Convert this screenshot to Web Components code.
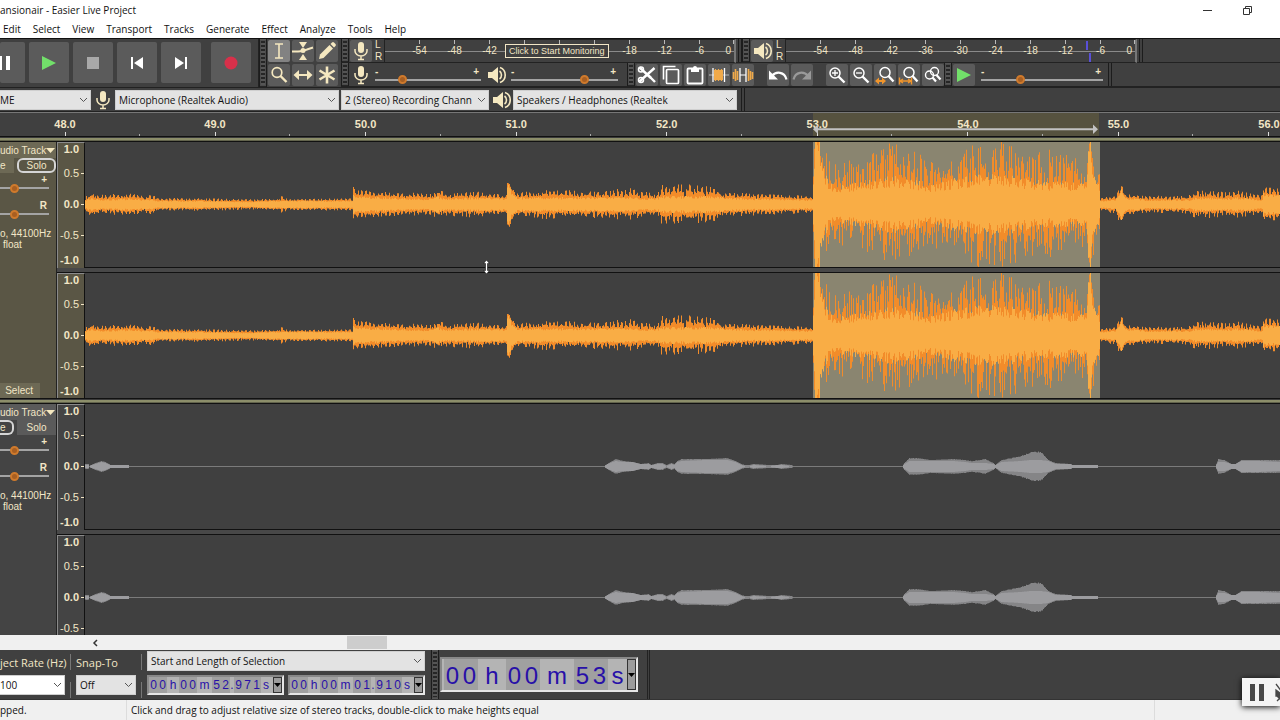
<!DOCTYPE html>
<html lang="en">
<head>
    <meta charset="UTF-8">
    <meta name="viewport" content="width=device-width, initial-scale=1.0">
    <title>Easier Live Project</title>
    <style>
        body {
            margin: 0;
            --ui: "Open Sans", "Noto Sans", sans-serif;
            --small: "Liberation Sans", Arial, sans-serif;
            --dock: #404040;
            --button: #5b5b5b;
            --cream: #f2e6c6;
            font: 10px/16px var(--ui);
        }
    </style>
</head>
<body>
    <audio-editor></audio-editor>
<script>
    // Base class: puts the styles and markup of a component in its shadow root
    class BaseElement extends HTMLElement {
        connectedCallback() {
            if (this.shadowRoot) return;
            const shadow = this.attachShadow({ mode: 'open' });
            shadow.innerHTML = `<style>* { box-sizing: border-box; }${this.styles()}</style>${this.render()}`;
        }
        attr(name, fallback = '') {
            return this.getAttribute(name) || fallback;
        }
    }

    // All icons are drawn on a 22x22 grid
    const ICONS = {
        pause: '<path d="M5 4h4v14H5zM13 4h4v14h-4z" fill="#fff"/>',
        play: '<path d="M4 4l14 7-14 7z" fill="#72e06a"/>',
        stop: '<path d="M5 5h12v12H5z" fill="#a9a9a9"/>',
        start: '<path d="M5 5h2v12H5zM17 5v12l-9-6z" fill="#fff"/>',
        end: '<path d="M15 5h2v12h-2zM5 5v12l9-6z" fill="#fff"/>',
        record: '<circle cx="11" cy="11" r="6.5" fill="#d8304a"/>',
        ibeam: '<path d="M7 4h8M7 18h8M11 4v14" fill="none" stroke="#f5e8c0" stroke-width="1.6"/>',
        envelope: '<path d="M7 2h8l-4 6zM7 20h8l-4-6z" fill="#f5e8c0"/><path d="M0 11.5h6c4 0 5-1 9-2l6-2" fill="none" stroke="#f5e8c0" stroke-width="2"/><circle cx="11" cy="10.500" r="2.500" fill="#f5e8c0"/>',
        pencil: '<path d="M3 19l1-4.500L13.500 5l3.500 3.500L7.500 18z" fill="#f5e8c0"/><path d="M14.500 4l1.500-1.500a1.500 1.500 0 0 1 2 0l1.500 1.500a1.500 1.500 0 0 1 0 2L18 7.500z" fill="#f5e8c0"/>',
        zoom: '<circle cx="9" cy="8.500" r="4.800" fill="none" stroke="#f5e8c0" stroke-width="1.700"/><path d="M12.500 12l6 6" stroke="#f5e8c0" stroke-width="2.400"/>',
        shift: '<path d="M1.500 11l5.500-5v4h8V6l5.500 5-5.500 5v-4H7v4z" fill="#f5e8c0"/>',
        multi: '<path d="M11 2.500v17M3.500 6.500l15 9M18.500 6.500l-15 9" stroke="#f5e8c0" stroke-width="2.600"/>',
        mic: '<rect x="8" y="2" width="6" height="11" rx="3" fill="#f5e8c0"/><path d="M5 9v2a6 5 0 0 0 12 0V9M11 16v4M8 19.500h6" fill="none" stroke="#f5e8c0" stroke-width="1.500"/>',
        speaker: '<path d="M3 8h4l6-5v16l-6-5H3z" fill="#f5e8c0"/><path d="M14.500 7a5 5 0 0 1 0 8M15 3.500a8 8 0 0 1 0 15" fill="none" stroke="#f5e8c0" stroke-width="1.600"/>',
        cut: '<path d="M3.500 3.500L15 14M3.500 17.500L18.500 4" stroke="#fff" stroke-width="2.400"/><circle cx="5" cy="5.500" r="2.500" fill="none" stroke="#fff" stroke-width="1.500"/><circle cx="5" cy="16" r="2.500" fill="none" stroke="#fff" stroke-width="1.500"/><path d="M12 11l7 7" stroke="#fff" stroke-width="2.400"/>',
        copy: '<path d="M3.500 15.500v-13h12" fill="none" stroke="#fff" stroke-width="1.600"/><rect x="6.500" y="5.500" width="12" height="14" rx="1" fill="none" stroke="#fff" stroke-width="1.700"/>',
        paste: '<rect x="3.500" y="4.500" width="15" height="15" rx="1" fill="none" stroke="#fff" stroke-width="1.800"/><path d="M7 4h2a2 2 0 0 1 4 0h2v4H7z" fill="#fff"/>',
        trim: '<path d="M1 11h20" stroke="#bbb"/><path d="M6 6h9v10H6z" fill="#f0aa4a"/><path d="M7.500 5v12M10.500 5v12M13.500 5v12" stroke="#f0aa4a" stroke-width="1.300"/><path d="M5 4v14M16.500 4v14" stroke="#fff" stroke-width="1.300"/>',
        silence: '<path d="M8 11h6" stroke="#fff"/><path d="M1.500 8v7M3.500 5v12M5.500 7v9M16.500 5v12M18.500 7v9M20.500 8v7" stroke="#f0aa4a" stroke-width="1.600"/><path d="M8 4v14M14 4v14" stroke="#fff" stroke-width="1.300"/>',
        undo: '<path d="M2 6.500v9h9z" fill="#fff"/><path d="M5 12c4-5 12.500-4.500 14.500 3.500" fill="none" stroke="#fff" stroke-width="2.200"/>',
        redo: '<path d="M20 6.500v9h-9z" fill="#9a9a9a"/><path d="M17 12C13 7 4.500 7.500 2.500 15.500" fill="none" stroke="#9a9a9a" stroke-width="2.200"/>',
        zoomin: '<circle cx="9" cy="9" r="5" fill="none" stroke="#fff" stroke-width="1.500"/><path d="M12.500 12.500l6 6" stroke="#fff" stroke-width="2.400"/><path d="M6 9h6M9 6v6" stroke="#fff" stroke-width="1.300"/>',
        zoomout: '<circle cx="9" cy="9" r="5" fill="none" stroke="#fff" stroke-width="1.500"/><path d="M12.500 12.500l6 6" stroke="#fff" stroke-width="2.400"/><path d="M6 9h6" stroke="#fff" stroke-width="1.300"/>',
        zoomsel: '<circle cx="11" cy="8.500" r="5" fill="none" stroke="#fff" stroke-width="1.500"/><path d="M14.500 12l5 5.500" stroke="#fff" stroke-width="2.400"/><path d="M1 17l4-3.500v2.500h3v-2.500l4 3.500-4 3.500v-2.500H5v2.500z" fill="#f0952c"/>',
        zoomfit: '<circle cx="11" cy="8.500" r="5" fill="none" stroke="#fff" stroke-width="1.500"/><path d="M14.500 12l5 5.500" stroke="#fff" stroke-width="2.400"/><path d="M1.500 13.500v7M13.500 13.500v7M2 17h11M5 15l-3 2 3 2M10 15l3 2-3 2" fill="none" stroke="#f0952c" stroke-width="1.400"/>',
        zoomtoggle: '<circle cx="12.500" cy="7.500" r="4" fill="none" stroke="#fff" stroke-width="1.400"/><circle cx="7.500" cy="11" r="4" fill="none" stroke="#fff" stroke-width="1.400"/><path d="M10.500 13.500l3.500 4M14.500 11l4 4.500" stroke="#fff" stroke-width="2.200"/>'
    };

    class SvgIcon extends BaseElement {
        styles() {
            return `
                :host { display: block; width: 22px; height: 22px; flex: none; }
                svg { display: block; width: 100%; height: 100%; }
            `;
        }
        render() {
            return `<svg viewBox="0 0 22 22" aria-hidden="true">${ICONS[this.attr('name')]}</svg>`;
        }
    }
    customElements.define('svg-icon', SvgIcon);

    class ToolButton extends BaseElement {
        styles() {
            return `
                :host { display: block; width: 22px; height: 22px; flex: none; }
                :host([large]) { width: 40px; height: 41px; }
                button {
                    display: flex;
                    align-items: center;
                    justify-content: center;
                    width: 100%;
                    height: 100%;
                    padding: 0;
                    border: 0;
                    border-radius: 2px;
                    background: var(--button);
                }
                :host([pressed]) button { background: #828282; }
                :host([cropped]) button { justify-content: flex-end; padding-right: 10px; }
            `;
        }
        render() {
            return `<button aria-label="${this.attr('label')}"><slot></slot></button>`;
        }
    }
    customElements.define('tool-button', ToolButton);

    // Ridged handle at the start of each toolbar
    class GrabHandle extends BaseElement {
        styles() {
            return `
                :host {
                    display: block;
                    width: 8px;
                    flex: none;
                    align-self: stretch;
                    border: 1px solid #1c1c1c;
                    border-width: 0 1px;
                    background: repeating-linear-gradient(#555 0 2px, #262626 2px 4px);
                    outline: 1px solid #4c4c4c;
                    outline-offset: -2px;
                }
            `;
        }
        render() { return ''; }
    }
    customElements.define('grab-handle', GrabHandle);

    class GainSlider extends BaseElement {
        styles() {
            return `
                :host { display: block; flex: none; color: var(--cream); }
                .signs {
                    display: flex;
                    justify-content: space-between;
                    height: 10px;
                    padding: 4px 2px 0 0;
                    font: bold 10px/6px var(--small);
                }
                input {
                    display: block;
                    appearance: none;
                    width: 100%;
                    height: 10px;
                    margin: 0;
                    background: linear-gradient(#a4a4a4, #a4a4a4) center / 100% 2px no-repeat;
                }
                input::-webkit-slider-thumb {
                    appearance: none;
                    width: 9px;
                    height: 9px;
                    border: 2px solid #cf7a2c;
                    border-radius: 50%;
                    background: #a85f22;
                }
            `;
        }
        render() {
            return `
                <div class="signs"><span>${this.attr('low')}</span><span>${this.attr('high')}</span></div>
                <input type="range" min="0" max="100" value="${this.attr('value')}" aria-label="${this.attr('label')}">
            `;
        }
    }
    customElements.define('gain-slider', GainSlider);

    class ComboBox extends BaseElement {
        styles() {
            return `
                :host { display: block; position: relative; height: 20px; flex: none; }
                select {
                    display: block;
                    appearance: none;
                    width: 100%;
                    height: 100%;
                    padding: 0 16px 0 3px;
                    border: 1px solid #cfcfcf;
                    border-radius: 0;
                    background: #e3e3e3;
                    color: #111;
                    font: inherit;
                }
                :host([flush]) select { padding-left: 0; border-left: 0; }
                :host([plain]) select { background: #fff; }
                svg { position: absolute; right: 3px; top: 7px; width: 9px; height: 6px; pointer-events: none; }
            `;
        }
        render() {
            return `
                <select aria-label="${this.attr('label')}"><option>${this.attr('value')}</option></select>
                <svg viewBox="0 0 9 6"><path d="M1 1l3.500 3.500L8 1" fill="none" stroke="#555"/></svg>
            `;
        }
    }
    customElements.define('combo-box', ComboBox);

    class LevelMeter extends BaseElement {
        styles() {
            return `
                :host { display: flex; flex: none; height: 24px; align-items: center; color: var(--cream); font: 10px/12px var(--small); }
                .sides { width: 12px; padding-left: 3px; }
                .scale {
                    position: relative;
                    display: grid;
                    grid-template-columns: repeat(9, 1fr) 17px;
                    width: 352px;
                    height: 24px;
                    padding-left: 17px;
                    border: 1px solid #222;
                    border-right: 2px solid #777;
                    background: linear-gradient(#8a8a8a, #8a8a8a) 0 11px / 100% 1px no-repeat;
                }
                .mark { padding-top: 5px; text-align: center; background: linear-gradient(#bbb, #bbb) center top / 1px 4px no-repeat; }
                .mark:last-of-type { text-align: right; padding-right: 3px; background-position: right top; }
                button {
                    position: absolute;
                    left: 120px;
                    top: 4px;
                    height: 14px;
                    padding: 0 3px;
                    border: 1px solid var(--cream);
                    background: var(--dock);
                    color: inherit;
                    font: 9px/12px var(--small);
                }
                svg { position: absolute; left: 0; top: 0; width: 350px; height: 22px; }
            `;
        }
        render() {
            const marks = ['-54', '-48', '-42', '-36', '-30', '-24', '-18', '-12', '-6', '0'];
            const prompt = this.attr('prompt');
            return `
                <slot></slot>
                <div class="sides">L<br>R</div>
                <div class="scale">
                    ${marks.map((m, i) => `<div class="mark">${prompt && i > 2 && i < 6 ? '' : m}</div>`).join('')}
                    ${prompt ? `<button>${prompt}</button>` : ''}
                    ${this.hasAttribute('peaks') ? '<svg viewBox="0 0 350 22"><path d="M300 1h2v9h-2zM303 13h2v9h-2z" fill="#5a50d8"/></svg>' : ''}
                </div>
            `;
        }
    }
    customElements.define('level-meter', LevelMeter);

    class TitleBar extends BaseElement {
        styles() {
            return `
                :host { display: flex; align-items: center; height: 20px; flex: none; background: #fff; color: #111; }
                h1 { flex: 1; margin: 0; font: inherit; }
                button { width: 40px; height: 20px; padding: 0; border: 0; background: none; }
                svg { display: block; margin: auto; width: 12px; height: 12px; }
                .controls { display: flex; padding-right: 13px; }
            `;
        }
        render() {
            return `
                <h1><slot></slot></h1>
                <div class="controls">
                    <button aria-label="Minimize"><svg viewBox="0 0 12 12"><path d="M2 6.500h9" stroke="#333"/></svg></button>
                    <button aria-label="Restore"><svg viewBox="0 0 12 12" fill="none" stroke="#333"><path d="M2.500 4.500h6v6h-6zM4.500 4V2.500h6v6H9"/></svg></button>
                </div>
            `;
        }
    }
    customElements.define('title-bar', TitleBar);

    class MenuBar extends BaseElement {
        styles() {
            return `
                :host { display: flex; gap: 12px; height: 18px; flex: none; padding-left: 3px; background: #fff; }
                button { padding: 0; border: 0; background: none; color: #111; font: inherit; }
            `;
        }
        render() {
            return this.attr('items').split(',').map(item => `<button>${item}</button>`).join('');
        }
    }
    customElements.define('menu-bar', MenuBar);

    class TimeRuler extends BaseElement {
        styles() {
            return `
                :host {
                    position: relative;
                    display: grid;
                    grid-template-columns: 140px repeat(7, 1fr) 86px;
                    height: 24px;
                    flex: none;
                    border-top: 1px solid #777;
                    background: var(--dock);
                    color: var(--cream);
                    font: bold 11px/22px var(--small);
                }
                svg { position: absolute; inset: 0; width: 100%; height: 100%; }
                .cell { display: flex; overflow: hidden; position: relative; }
                .cell:first-of-type { justify-content: flex-end; }
                .cell span {
                    flex: 0 0 150px;
                    text-align: center;
                    background:
                        linear-gradient(#ddd, #ddd) center bottom / 1px 4px no-repeat,
                        linear-gradient(#aaa, #aaa) right bottom / 1px 2px no-repeat;
                }
            `;
        }
        render() {
            const cells = [48, 49, 50, 51, 52, 53, 54, 55, 56].map(t => `<div class="cell"><span>${t}.0</span></div>`);
            return `
                <svg viewBox="0 0 1280 24" preserveAspectRatio="none">
                    <path d="M813 0h286v24H813z" fill="#56523f"/>
                </svg>
                ${cells.join('')}
                <svg viewBox="0 0 1280 24" preserveAspectRatio="none">
                    <path d="M813 17l5-5v4h275v-4l5 5-5 5v-4H818v4z" fill="#c2c2c2"/>
                </svg>
            `;
        }
    }
    customElements.define('time-ruler', TimeRuler);

    // Envelopes: [x, peak, rms] along a 1195 unit wide view, full scale is 62
    const MUSIC = [
        [0, 9, 4], [7, 12, 6], [14, 9, 4], [42, 11, 5], [60, 8, 4], [66, 10, 4], [74, 6, 3], [110, 6, 3], [160, 5, 2],
        [190, 5, 3], [196, 8, 3], [204, 5, 3], [267, 6, 3], [268, 17, 8], [275, 14, 7], [300, 12, 6], [340, 11, 5],
        [348, 11, 5], [352, 17, 7], [360, 11, 5], [390, 13, 6], [421, 9, 5], [422, 27, 18], [424, 24, 16], [428, 15, 9], [432, 11, 6],
        [460, 15, 6], [500, 13, 6], [545, 16, 6], [570, 10, 5], [576, 19, 7], [605, 20, 7], [628, 17, 7], [640, 12, 6],
        [665, 11, 5], [727, 8, 4], [728, 30, 25], [729, 62, 45], [730, 62, 62], [734, 62, 62], [735, 48, 38], [740, 56, 22], [746, 40, 16], [755, 42, 14],
        [770, 48, 16], [790, 54, 19], [810, 64, 22], [825, 60, 20], [845, 42, 15], [860, 50, 18], [873, 54, 20],
        [890, 64, 22], [905, 66, 24], [920, 66, 24], [932, 62, 20], [945, 52, 19], [960, 56, 18], [985, 48, 16], [1001, 42, 16],
        [1003, 62, 48], [1005, 62, 62], [1007, 60, 38], [1010, 34, 18], [1014, 32, 16], [1015, 6, 3], [1030, 9, 4], [1034, 18, 8],
        [1036, 22, 14], [1040, 10, 6], [1060, 8, 4], [1105, 9, 4], [1110, 15, 6], [1140, 12, 5], [1150, 14, 6], [1177, 9, 4],
        [1178, 20, 10], [1182, 17, 9], [1195, 15, 8]
    ];
    const VOICE = [
        [0, 2, 1], [3, 2, 1], [4, 0, 0], [6, 1, 1], [10, 3, 2], [16, 5, 4], [20, 4, 3], [25, 1, 1], [43, 1, 1], [44, 0, 0],
        [519, 0, 0], [522, 2, 2], [530, 7, 5], [538, 5, 4], [547, 4, 4], [555, 2, 2], [563, 3, 2], [566, 1, 1], [572, 3, 2],
        [577, 3, 2], [581, 1, 0], [586, 3, 2], [589, 2, 1], [592, 5, 4], [596, 7, 5], [620, 7, 6], [642, 8, 6], [650, 5, 4],
        [656, 2, 1], [660, 1, 0], [664, 1, 0], [668, 2, 1], [684, 1, 0], [692, 1, 1], [696, 2, 1], [706, 1, 0], [708, 0, 0],
        [817, 0, 0], [819, 3, 2], [824, 8, 5], [833, 8, 5], [845, 6, 5], [868, 7, 5], [880, 6, 4], [886, 5, 3], [900, 7, 3],
        [908, 3, 2], [910, 1, 1], [916, 6, 4], [935, 10, 5], [945, 14, 6], [955, 15, 6], [963, 6, 5], [970, 3, 2], [985, 2, 2],
        [987, 1, 1], [1012, 1, 1], [1013, 0, 0], [1130, 0, 0], [1133, 7, 4], [1139, 6, 4], [1146, 2, 2], [1150, 2, 2], [1156, 6, 5],
        [1172, 6, 5], [1195, 6, 4]
    ];

    class WaveForm extends BaseElement {
        styles() {
            return `
                :host { display: block; height: 125px; background: var(--dock); }
                svg { display: block; width: 100%; height: 100%; }
            `;
        }
        at(points, x) {
            let i = 1;
            while (i < points.length - 1 && points[i][0] < x) i++;
            const [a, b] = [points[i - 1], points[i]];
            const k = (x - a[0]) / (b[0] - a[0]);
            return [a[1] + (b[1] - a[1]) * k, a[2] + (b[2] - a[2]) * k];
        }
        render() {
            const voice = this.attr('kind') === 'voice';
            let seed = voice ? 5 : 23;
            const random = () => (seed = (seed * 16807) % 2147483647) / 2147483647;
            const points = voice ? VOICE : MUSIC;
            let peaks = '';
            let body = '';
            for (let x = 0; x < 1195; x++) {
                const [peak, rms] = this.at(points, x);
                const loud = x > 734 && x < 1015 && (x < 1002 || x > 1008);
                const teeth = voice || loud || x % 4 < 2 ? 1 : 0.5;
                const spread = voice ? 0.85 + random() * 0.15 : Math.pow(random(), loud ? 1.4 : 0.5) * teeth;
                const lower = voice ? spread : Math.pow(random(), loud ? 1.8 : 0.7) * teeth;
                const up = Math.min(62, rms + (peak - rms) * spread);
                const down = Math.min(62, rms + (peak - rms) * lower * 0.95);
                const core = voice ? rms : rms * (0.75 + random() * (loud ? 0.6 : 0.4));
                if (up > 0.2) peaks += `M${x} ${(62 - up).toFixed(1)}h1V${(63 + down).toFixed(1)}h-1z`;
                if (core > 0.2) body += `M${x} ${(62 - core).toFixed(1)}h1V${(63 + core).toFixed(1)}h-1z`;
            }
            return `
                <svg viewBox="0 0 1195 125" preserveAspectRatio="none" aria-hidden="true">
                    ${voice ? '' : '<path d="M728 0h287v125H728z" fill="#8a8570"/>'}
                    <path d="M0 62h1195v1H0z" fill="${voice ? '#7b7b7b' : '#f8ab43'}"/>
                    <path d="${peaks}" fill="${voice ? '#858587' : '#f28c2a'}"/>
                    <path d="${body}" fill="${voice ? '#9c9c9f' : '#f9ad45'}"/>
                </svg>
            `;
        }
    }
    customElements.define('wave-form', WaveForm);

    class AudioTrack extends BaseElement {
        styles() {
            return `
                :host {
                    --face: #444;
                    --panel-button: #5a5a5a;
                    display: grid;
                    grid-template-columns: 57px 1fr;
                    flex: none;
                    color: var(--cream);
                    font: 10px/11px var(--small);
                }
                :host([selected]) { --face: #5a5645; --panel-button: #6d6955; }
                .panel { display: flex; flex-direction: column; align-items: flex-start; background: var(--face); border-right: 1px solid #222; }
                button { padding: 0; border: 0; color: inherit; font: inherit; background: var(--panel-button); }
                .name { display: flex; align-items: center; justify-content: space-between; width: 100%; height: 16px; padding-right: 2px; white-space: nowrap; }
                .name svg { flex: none; width: 9px; height: 5px; }
                .pair { display: flex; gap: 3px; width: 100%; height: 15px; }
                .mute { width: 14px; text-align: left; }
                .solo { flex: 1; }
                .on { border: 2px solid #d5d5d5; border-radius: 6px; background: var(--face); }
                .mute.on { border-left: 0; border-radius: 0 6px 6px 0; }
                gain-slider { width: 49px; }
                gain-slider + gain-slider { margin-top: 6px; }
                p { margin: 9px 0 0; white-space: nowrap; }
                p span { display: block; padding-left: 3px; }
                .select { width: 40px; height: 15px; margin-top: auto; padding-right: 7px; text-align: right; }
                .channel { display: grid; grid-template-columns: 28px 1fr; }
                .channel + .channel { border-top: 6px solid #484848; border-image: linear-gradient(#111 0 1px, #484848 1px 5px, #111 5px) 6 0 0; }
                .scale {
                    display: grid;
                    grid-template-rows: 12px 37px 24px 38px 12px;
                    align-items: center;
                    justify-items: end;
                    border: 1px solid #8a8a8a;
                    border-width: 1px 0 0 1px;
                    margin-bottom: -1px;
                    border-right: 1px solid #111;
                    background: var(--face);
                    background-clip: padding-box;
                    font-size: 11px;
                }
                .scale span { display: flex; align-items: center; gap: 2px; padding-right: 5px; }
                .scale span.tick { padding-right: 0; }
                .scale .tick::after { content: ""; width: 3px; height: 1px; background: var(--cream); }
                .scale b { font-weight: bold; }
                wave-form { min-width: 0; }
            `;
        }
        render() {
            const kind = this.attr('kind');
            const channel = `
                <div class="channel">
                    <div class="scale">
                        <span><b>1.0</b></span>
                        <span class="tick">0.5</span>
                        <span class="tick"><b>0.0</b></span>
                        <span class="tick">-0.5</span>
                        <span><b>-1.0</b></span>
                    </div>
                    <wave-form kind="${kind}"></wave-form>
                </div>
            `;
            return `
                <div class="panel">
                    <button class="name">udio Track<svg viewBox="0 0 9 5"><path d="M0 0h9L4.500 5z" fill="#f5e8c0"/></svg></button>
                    <div class="pair">
                        <button class="mute ${kind === 'voice' ? 'on' : ''}" aria-label="Mute">e</button>
                        <button class="solo ${kind === 'music' ? 'on' : ''}">Solo</button>
                    </div>
                    <gain-slider label="Gain" high="+" value="26"></gain-slider>
                    <gain-slider label="Pan" high="R" value="26"></gain-slider>
                    <p>o, 44100Hz<span>float</span></p>
                    <button class="select">Select</button>
                </div>
                <div>${channel}${channel}</div>
            `;
        }
    }
    customElements.define('audio-track', AudioTrack);

    // Time counter; digits and units sit in fixed cells
    class TimeField extends BaseElement {
        styles() {
            return `
                :host {
                    display: flex;
                    flex: none;
                    height: 20px;
                    border: 2px solid #e6e6e6;
                    border-top-color: #888;
                    border-left-color: #888;
                    background: #b4b4b4;
                    color: #2810a8;
                    font: 12px/17px var(--small);
                    --cell: 9px;
                    --h: 12px;
                    --m: 15px;
                    --s: 10px;
                }
                :host([large]) { height: 35px; font-size: 24px; line-height: 34px; --cell: 17px; --h: 28px; --m: 34px; --s: 19px; }
                .digits { display: flex; flex: 1; }
                :host([large]) .digits { padding-left: 2px; }
                .digits span { flex: none; width: var(--cell); text-align: center; background: #a0a0a0; }
                .digits .unit { background: none; }
                .digits .h { width: var(--h); }
                .digits .m { width: var(--m); }
                .digits .s { width: var(--s); }
                .digits .dot { width: 4px; }
                button { width: 9px; padding: 0; border: 1px solid #333; background: #9c9c9c; }
                svg { display: block; width: 7px; height: 4px; }
            `;
        }
        render() {
            const cells = [...this.attr('value')].map(c => {
                const kind = c === '.' ? 'unit dot' : /\d/.test(c) ? '' : `unit ${c}`;
                return `<span class="${kind}">${c}</span>`;
            });
            return `
                <div class="digits">${cells.join('')}</div>
                <button aria-label="Time format"><svg viewBox="0 0 7 4"><path d="M0 0h7L3.500 4z" fill="#000"/></svg></button>
            `;
        }
    }
    customElements.define('time-field', TimeField);

    class ScrollStrip extends BaseElement {
        styles() {
            return `
                :host { display: grid; grid-template-columns: 85px 20px 1fr; align-items: center; height: 15px; flex: none; background: #f0f0f0; }
                button { grid-column: 2; height: 15px; padding: 0; border: 0; background: none; }
                svg { display: block; margin: auto; width: 6px; height: 8px; }
                .thumb { width: 40px; height: 13px; margin-left: 242px; background: #cdcdcd; }
            `;
        }
        render() {
            return `
                <button aria-label="Scroll left"><svg viewBox="0 0 6 8"><path d="M5 1L2 4l3 3" fill="none" stroke="#333" stroke-width="1.500"/></svg></button>
                <div class="thumb"></div>
            `;
        }
    }
    customElements.define('scroll-strip', ScrollStrip);

    class SelectionDock extends BaseElement {
        styles() {
            return `
                :host { display: flex; height: 50px; flex: none; background: var(--dock); color: var(--cream); border-bottom: 1px solid #333; }
                .group { display: grid; grid-template-rows: 20px 20px; grid-template-columns: 100%; gap: 4px; padding-top: 1px; align-content: start; }
                .rate { width: 65px; }
                .snap { width: 60px; }
                .range { width: 278px; }
                .label { align-self: end; white-space: nowrap; font-size: 11px; }
                .rule { width: 11px; background: linear-gradient(#777 0 16px, transparent 16px 28px, #777 28px 44px, transparent 44px) center 4px / 1px 44px no-repeat; }
                .times { display: flex; gap: 4px; }
                .times time-field { flex: 1; }
                grab-handle { margin-left: 6px; }
                .big { width: 198px; margin: 7px 9px 0 1px; }
                .end { width: 3px; border: 1px solid #222; border-width: 0 1px; }
            `;
        }
        render() {
            return `
                <div class="group rate">
                    <span class="label">ject Rate (Hz)</span>
                    <combo-box plain flush label="Project Rate (Hz)" value="100"></combo-box>
                </div>
                <div class="rule"></div>
                <div class="group snap">
                    <span class="label">Snap-To</span>
                    <combo-box label="Snap-To" value="Off"></combo-box>
                </div>
                <div class="rule"></div>
                <div class="group range">
                    <combo-box label="Selection mode" value="Start and Length of Selection"></combo-box>
                    <div class="times">
                        <time-field value="00h00m52.971s"></time-field>
                        <time-field value="00h00m01.910s"></time-field>
                    </div>
                </div>
                <grab-handle></grab-handle>
                <time-field class="big" large value="00h00m53s"></time-field>
                <div class="end"></div>
            `;
        }
    }
    customElements.define('selection-dock', SelectionDock);

    class StatusBar extends BaseElement {
        styles() {
            return `
                :host { display: grid; grid-template-columns: 126px 1fr 125px; height: 20px; flex: none; background: #f0f0f0; color: #111; line-height: 21px; }
                .message { padding-left: 4px; border: 1px solid #dcdcdc; border-width: 0 1px; }
            `;
        }
        render() {
            return `
                <slot name="state"></slot>
                <div class="message"><slot></slot></div>
            `;
        }
    }
    customElements.define('status-bar', StatusBar);

    class AudioEditor extends BaseElement {
        styles() {
            return `
                :host { position: relative; display: flex; flex-direction: column; height: 100vh; overflow: hidden; background: var(--dock); }
                .tools { display: flex; height: 50px; flex: none; border-top: 1px solid #111; border-bottom: 1px solid #222; }
                .transport { display: flex; gap: 4px; padding: 3px 7px 0 0; border-right: 1px solid #222; }
                .transport tool-button:first-child { width: 25px; }
                .transport tool-button:last-child { margin-left: 6px; }
                .modes { display: grid; grid-template-columns: repeat(3, 22px); gap: 2px; padding: 1px 3px 0 1px; align-content: start; }
                .bars { flex: 1; min-width: 0; }
                .bar { display: flex; align-items: center; height: 24px; border-bottom: 1px solid #222; }
                .bar tool-button + tool-button { margin-left: 2px; }
                .bar .spaced { margin-left: 13px !important; }
                .bar grab-handle { margin-right: 1px; }
                .end { width: 4px; align-self: stretch; margin-left: 2px; border: 1px solid #1c1c1c; border-width: 0 1px; }
                .input { width: 106px; margin: 0 4px 0 3px; }
                .output { width: 107px; margin: 0 9px 0 4px; }
                .speed { width: 122px; margin: 0 3px 0 6px; }
                .devices { display: flex; align-items: center; height: 24px; flex: none; border-bottom: 1px solid #222; }
                .devices svg-icon { margin: 0 1px; }
                .host { width: 91px; }
                .source { width: 224px; margin-right: 2px; }
                .channels { width: 148px; }
                .tracks { position: relative; display: flex; flex-direction: column; flex: 1; min-height: 0; overflow: hidden; }
                .edge { height: 6px; flex: none; background: linear-gradient(#111 0 1px, #3a3a3a 1px 2px, #8c8e6a 2px 4px, #62634c 4px 5px, #111 5px); }
                .cursor { position: absolute; left: 481px; top: 123px; width: 11px; height: 16px; }
                .overlay {
                    position: absolute;
                    right: 0;
                    bottom: 14px;
                    display: flex;
                    align-items: center;
                    width: 38px;
                    height: 28px;
                    background: #f4f4f4;
                    box-shadow: 0 1px 6px #000;
                }
                .overlay button { width: 38px; height: 28px; padding: 0; border: 0; background: none; }
                .overlay svg { display: block; width: 38px; height: 28px; }
            `;
        }
        render() {
            const tool = (name, label, extra = '') =>
                `<tool-button label="${label}" ${extra}><svg-icon name="${name}"></svg-icon></tool-button>`;
            return `
                <title-bar>ansionair - Easier Live Project</title-bar>
                <menu-bar items="Edit,Select,View,Transport,Tracks,Generate,Effect,Analyze,Tools,Help"></menu-bar>
                <div class="tools">
                    <div class="transport">
                        ${tool('pause', 'Pause', 'large cropped')}
                        ${tool('play', 'Play', 'large')}
                        ${tool('stop', 'Stop', 'large')}
                        ${tool('start', 'Skip to start', 'large')}
                        ${tool('end', 'Skip to end', 'large')}
                        ${tool('record', 'Record', 'large')}
                    </div>
                    <grab-handle></grab-handle>
                    <div class="modes">
                        ${tool('ibeam', 'Selection tool', 'pressed')}
                        ${tool('envelope', 'Envelope tool')}
                        ${tool('pencil', 'Draw tool')}
                        ${tool('zoom', 'Zoom tool')}
                        ${tool('shift', 'Time shift tool')}
                        ${tool('multi', 'Multi-tool')}
                    </div>
                    <div class="bars">
                        <div class="bar">
                            <grab-handle></grab-handle>
                            <level-meter prompt="Click to Start Monitoring">${tool('mic', 'Record meter')}</level-meter>
                            <div class="end"></div>
                            <grab-handle></grab-handle>
                            <level-meter peaks>${tool('speaker', 'Playback meter')}</level-meter>
                            <div class="end"></div>
                        </div>
                        <div class="bar">
                            <grab-handle></grab-handle>
                            <svg-icon name="mic"></svg-icon>
                            <gain-slider class="input" label="Recording volume" low="-" high="+" value="24"></gain-slider>
                            <svg-icon name="speaker"></svg-icon>
                            <gain-slider class="output" label="Playback volume" low="-" high="+" value="70"></gain-slider>
                            <grab-handle></grab-handle>
                            ${tool('cut', 'Cut')}
                            ${tool('copy', 'Copy')}
                            ${tool('paste', 'Paste')}
                            ${tool('trim', 'Trim')}
                            ${tool('silence', 'Silence')}
                            ${tool('undo', 'Undo', 'class="spaced"')}
                            ${tool('redo', 'Redo')}
                            ${tool('zoomin', 'Zoom in', 'class="spaced"')}
                            ${tool('zoomout', 'Zoom out')}
                            ${tool('zoomsel', 'Zoom to selection')}
                            ${tool('zoomfit', 'Fit project')}
                            ${tool('zoomtoggle', 'Zoom toggle')}
                            <grab-handle></grab-handle>
                            ${tool('play', 'Play at speed')}
                            <gain-slider class="speed" label="Playback speed" low="-" high="+" value="31"></gain-slider>
                            <div class="end"></div>
                        </div>
                    </div>
                </div>
                <div class="devices">
                    <combo-box flush class="host" label="Audio host" value="ME"></combo-box>
                    <svg-icon name="mic"></svg-icon>
                    <combo-box class="source" label="Recording device" value="Microphone (Realtek Audio)"></combo-box>
                    <combo-box class="channels" label="Recording channels" value="2 (Stereo) Recording Chann"></combo-box>
                    <svg-icon name="speaker"></svg-icon>
                    <combo-box class="source" label="Playback device" value="Speakers / Headphones (Realtek"></combo-box>
                    <div class="end"></div>
                </div>
                <time-ruler></time-ruler>
                <div class="tracks">
                    <div class="edge"></div>
                    <audio-track kind="music" selected></audio-track>
                    <div class="edge"></div>
                    <audio-track kind="voice"></audio-track>
                    <svg class="cursor" viewBox="0 0 11 16"><path d="M5.500 1l3 3.500h-2v7h2l-3 3.500-3-3.500h2v-7h-2z" fill="#fff" stroke="#111" stroke-width=".6"/></svg>
                </div>
                <scroll-strip></scroll-strip>
                <selection-dock></selection-dock>
                <status-bar><span slot="state">pped.</span>Click and drag to adjust relative size of stereo tracks, double-click to make heights equal</status-bar>
                <div class="overlay">
                    <button aria-label="Pause video">
                        <svg viewBox="0 0 38 28"><path d="M8 6h5v17H8zM17 6h5v17h-5z" fill="#484848"/><path d="M34 6l6 8M34 12l5 4v6l-4-4h-1zM35 23l3-3" fill="#484848" stroke="#484848" stroke-width="1.300"/></svg>
                    </button>
                </div>
            `;
        }
    }
    customElements.define('audio-editor', AudioEditor);
</script>
</body>
</html>
